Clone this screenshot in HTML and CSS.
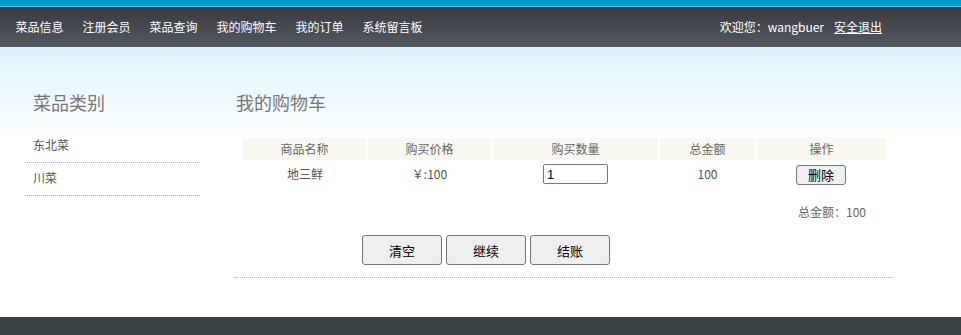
FILE: index.html
```html
<!DOCTYPE html>
<html lang="zh">
<head>
<meta charset="utf-8">
<title>我的购物车</title>
<link rel="stylesheet" href="styles.css">
</head>
<body>
<div class="topstrip"></div>
<div class="header">
  <ul class="nav">
    <li>菜品信息</li>
    <li>注册会员</li>
    <li>菜品查询</li>
    <li>我的购物车</li>
    <li>我的订单</li>
    <li>系统留言板</li>
  </ul>
  <div class="user">
    <span>欢迎您：wangbuer</span>
    <a class="logout">安全退出</a>
  </div>
</div>
<div class="page">
  <div class="sidebar">
    <h2 class="title">菜品类别</h2>
    <ul class="cats">
      <li>东北菜</li>
      <li>川菜</li>
    </ul>
  </div>
  <div class="main">
    <h2 class="title">我的购物车</h2>
    <table class="cart">
      <thead>
        <tr>
          <th class="c1">商品名称</th>
          <th class="c2">购买价格</th>
          <th class="c3">购买数量</th>
          <th class="c4">总金额</th>
          <th class="c5">操作</th>
        </tr>
      </thead>
      <tbody>
        <tr>
          <td>地三鲜</td>
          <td>￥:100</td>
          <td><input class="qty" type="text" value="1"></td>
          <td>100</td>
          <td><button class="del">删除</button></td>
        </tr>
      </tbody>
    </table>
    <div class="total">总金额：100</div>
    <div class="actions">
      <button class="btn">清空</button>
      <button class="btn">继续</button>
      <button class="btn">结账</button>
    </div>
  </div>
</div>
<div class="footer"></div>
</body>
</html>
```
FILE: styles.css
```css
html, body {
  margin: 0;
  padding: 0;
}
body {
  width: 961px;
  height: 335px;
  overflow: hidden;
  font-family: "Noto Sans CJK SC", "Liberation Sans", sans-serif;
  font-size: 12px;
  line-height: 18px;
  color: #666;
  background: linear-gradient(to bottom, #dcf3fb 47px, #ffffff 140px, #ffffff 100%);
}
.topstrip {
  height: 6px;
  background: #0599c9;
  border-bottom: 1px solid #5cc3e3;
}
.header {
  height: 40px;
  background: linear-gradient(to bottom, #383b40, #535960);
  display: flex;
  align-items: center;
  justify-content: space-between;
  padding: 0 79px 0 6px;
  color: #fff;
  font-size: 12px;
}
.nav {
  list-style: none;
  margin: 0;
  padding: 0;
  display: flex;
}
.nav li {
  padding: 0 9.5px;
  line-height: 40px;
}
.user {
  display: flex;
  gap: 10px;
}
.logout {
  color: #fff;
  text-decoration: underline;
}
.page {
  display: flex;
  padding: 0 0 0 25px;
  height: 270px;
}
.sidebar {
  width: 175px;
}
.title {
  margin: 0;
  padding: 43px 0 0 8px;
  height: 24px;
  line-height: 24px;
  font-size: 18px;
  font-weight: normal;
  color: #777;
}
.cats {
  list-style: none;
  margin: 16px 0 0;
  padding: 0;
}
.cats li {
  height: 32px;
  line-height: 30px;
  padding-left: 8px;
  font-size: 12px;
  color: #555;
  border-bottom: 1px dotted #aaa;
}
.main {
  margin-left: 35px;
  width: 658px;
}
.main .title {
  padding-left: 1px;
}
.cart {
  margin: 24px 0 0 8px;
  width: 642px;
  border-collapse: collapse;
  table-layout: fixed;
}
.cart th {
  background: #f9f8ee;
  font-weight: normal;
  height: 22px;
  line-height: 22px;
  padding: 0;
  border-left: 2px solid #fff;
  color: #666;
}
.cart th:first-child {
  border-left: none;
}
.c1 { width: 123px; }
.c2 { width: 123px; }
.c3 { width: 165px; }
.c4 { width: 95px; }
.c5 { width: 129px; }
.cart td {
  text-align: center;
  vertical-align: top;
  height: 24px;
  line-height: 20px;
  padding: 4px 0 0;
  color: #555;
}
.qty {
  display: inline-block;
  vertical-align: top;
  box-sizing: border-box;
  width: 65px;
  height: 20px;
  padding: 1px 3px;
  border: 1px solid #767676;
  border-radius: 2px;
  font-family: "Liberation Sans", sans-serif;
  font-size: 13px;
  line-height: 16px;
  color: #000;
  margin: 0;
}
.del {
  display: inline-block;
  vertical-align: top;
  box-sizing: border-box;
  width: 50px;
  height: 20px;
  margin-top: 1px;
  padding: 0;
  font-family: "Noto Sans CJK SC", sans-serif;
  font-size: 13px;
  line-height: 16px;
  color: #000;
  background: #efefef;
  border: 1px solid #767676;
  border-radius: 3px;
}
.total {
  text-align: right;
  padding-right: 27px;
  margin-top: 14px;
  height: 20px;
  line-height: 20px;
  color: #666;
}
.actions {
  display: flex;
  gap: 4px;
  margin: 13px 0 0;
  padding: 0 0 12px 127px;
  border-bottom: 1px dotted #aaa;
}
.btn {
  box-sizing: border-box;
  width: 80px;
  height: 30px;
  padding: 0;
  font-family: "Noto Sans CJK SC", sans-serif;
  font-size: 13px;
  color: #000;
  background: #efefef;
  border: 1px solid #767676;
  border-radius: 3px;
}
.footer {
  height: 18px;
  background: #3a4246;
}
```
